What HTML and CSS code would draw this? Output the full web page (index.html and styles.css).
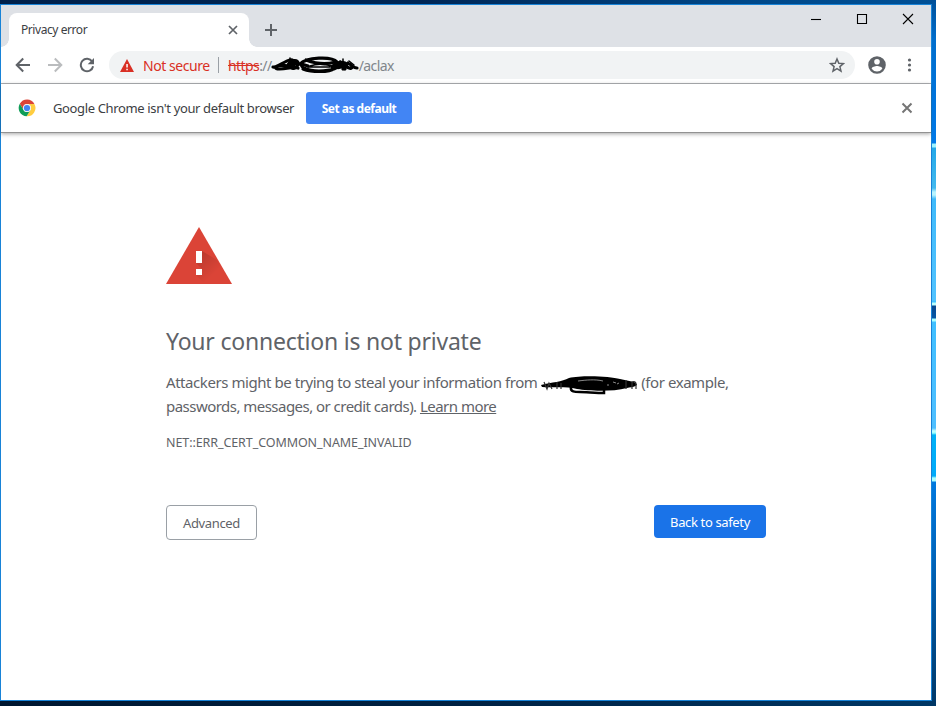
FILE: index.html
```
<!DOCTYPE html>
<html lang="en">
<head>
  <meta charset="UTF-8" />
  <meta name="viewport" content="width=device-width, initial-scale=1.0" />
  <title>Privacy error</title>
  <link rel="stylesheet" href="styles.css">
</head>
<body>
  <div class="window">
    <div class="titlebar">
      <div class="tab">
        <span class="tab-title">Privacy error</span>
        <svg class="tab-close" width="10" height="10" viewBox="0 0 10 10"><path d="M1 1l8 8M9 1L1 9" /></svg>
      </div>
      <svg class="new-tab" width="14" height="14" viewBox="0 0 14 14"><path d="M7 1v12M1 7h12" /></svg>
      <div class="window-buttons">
        <svg width="12" height="12" viewBox="0 0 12 12"><path d="M1 6.5h10" /></svg>
        <svg width="12" height="12" viewBox="0 0 12 12"><path d="M1.5 1.5h9v9h-9z" /></svg>
        <svg width="12" height="12" viewBox="0 0 12 12"><path d="M1 1l10 10M11 1L1 11" /></svg>
      </div>
    </div>

    <div class="toolbar">
      <svg class="nav-icon" width="16" height="16" viewBox="0 0 16 16"><path d="M15 8H2M8.2 1.5L1.7 8l6.5 6.5" /></svg>
      <svg class="nav-icon disabled" width="16" height="16" viewBox="0 0 16 16"><path d="M1 8h13M7.8 1.5L14.3 8l-6.5 6.5" /></svg>
      <svg class="nav-icon" width="16" height="16" viewBox="0 0 16 16"><path d="M13.2 4.6A6.2 6.2 0 1 0 14.1 9.2" /><path class="solid" d="M15 1v6.3H8.7z" /></svg>
      <div class="omnibox">
        <svg class="warn-icon" width="14" height="13" viewBox="0 0 14 13"><path fill="#d93025" d="M7 0l7 13H0z" /><path fill="#fff" d="M6.3 5h1.5v3.5H6.3zM6.3 9.7h1.5v1.5H6.3z" /></svg>
        <span class="not-secure">Not secure</span>
        <span class="divider"></span>
        <span class="url"><s>https</s>://<svg class="url-scribble" width="90" height="20" viewBox="0 0 90 20">
          <path d="M3 12C8 13 14 6 20 5s5 7-1 8-15 2-13-1 14-1 22 1" />
          <path d="M17 12C20 4 29 4 28 9s-8 6-7 2 12-2 17 0" />
          <path d="M30 9C36 2 62 1 67 7s-6 9-18 9-20-4-17-8M33 14c8 3 26 4 32-1M36 5c8 3 20 5 29 2" />
          <path d="M62 12c5-5 10-5 13-4s-6 6-9 4 6-5 10-1 8 2 5-1 2 3 6 3M70 7l5 7M78 8l-5 6" />
          <path class="thin" d="M40 11c8-3 15-2 22 0M20 3v3M73 4v4M79 6l5 4M38 12h22" />
        </svg>/aclax</span>
        <svg class="star" width="16" height="16" viewBox="0 0 16 16"><path d="M8 2l1.8 4.2 4.6.4-3.5 3 1.1 4.5L8 11.7l-4 2.4 1.1-4.5-3.5-3 4.6-.4z" /></svg>
      </div>
      <svg class="avatar" width="18" height="18" viewBox="0 0 18 18"><path d="M9 .2a8.8 8.8 0 1 0 0 17.6A8.8 8.8 0 0 0 9 .2zM9 3a2.8 2.8 0 1 1 0 5.6A2.8 2.8 0 0 1 9 3zm0 12.5a6.3 6.3 0 0 1-5.3-2.8c0-1.7 3.5-2.7 5.3-2.7s5.3 1 5.3 2.7A6.3 6.3 0 0 1 9 15.5z" /></svg>
      <svg class="menu" width="5" height="14" viewBox="0 0 5 14"><circle cx="2.5" cy="2" r="1.6" /><circle cx="2.5" cy="7" r="1.6" /><circle cx="2.5" cy="12" r="1.6" /></svg>
    </div>

    <div class="infobar">
      <svg class="chrome-logo" width="18" height="18" viewBox="0 0 18 18">
        <path fill="#db4437" d="M1.8 4.8A8.3 8.3 0 0 1 16.400 5H9a4 4 0 0 0-3.600 5.800z" />
        <path fill="#ffcd40" d="M16.400 5A8.300 8.300 0 0 1 8.600 17.300L12.500 11A4 4 0 0 0 9 5z" />
        <path fill="#0f9d58" d="M1.800 4.800A8.300 8.300 0 0 0 8.600 17.300l3.900-6.300a4 4 0 0 1-7.100-.2z" />
        <circle cx="9" cy="9" r="3.900" fill="#f1f1f1" />
        <circle cx="9" cy="9" r="3.100" fill="#4285f4" />
      </svg>
      <span class="infobar-text">Google Chrome isn't your default browser</span>
      <button class="default-button">Set as default</button>
      <svg class="infobar-close" width="12" height="12" viewBox="0 0 12 12"><path d="M1.5 1.5l9 9M10.5 1.5l-9 9" /></svg>
    </div>

    <main class="page">
      <div class="interstitial">
        <svg class="big-warning" width="66" height="57" viewBox="0 0 66 57">
          <defs>
            <linearGradient id="shade" x1="0" y1="0" x2="1" y2="1">
              <stop offset="0" stop-color="#000" stop-opacity=".18" />
              <stop offset=".6" stop-color="#000" stop-opacity="0" />
            </linearGradient>
          </defs>
          <path fill="#db4437" d="M33 0l33 57H0z" />
          <path fill="url(#shade)" d="M36 24l15 9 15 24H39l-9-9 6-6-6-6z" />
          <path fill="#fff" d="M30 24h6v12h-6zM30 42h6v6h-6z" />
        </svg>
        <h1>Your connection is not private</h1>
        <p class="message"><span class="line-one">Attackers might be trying to steal your information from <svg class="host-scribble" width="98" height="20" viewBox="0 0 98 20">
          <path class="ink" d="M1 10C12 7 22 7 29 3 41 0 70 1 80 4l14 3c6 3 2 5-7 6-15 4-38 3-50 1-12-3-24-1-35-2z" />
          <path d="M31 12c-1 5 4 5 9 5s17 1 24 1v-4" />
          <path class="letters" d="M4 7l3 7 2-6 3 6M17 7v7M21 14V8M86 5v9M92 14V7c2-1 4 0 4 2v5" />
          <path class="gap" d="M38 6c8-1 17-2 25 0M73 7l3 1M77 9l2-1M67 10l2 0" />
        </svg> (for example,</span> <span class="line-two">passwords, messages, or credit cards). <a href="#">Learn more</a></span></p>
        <div class="error-code">NET::ERR_CERT_COMMON_NAME_INVALID</div>
        <div class="actions">
          <button class="advanced">Advanced</button>
          <button class="safety">Back to safety</button>
        </div>
      </div>
    </main>
  </div>
  <div class="desktop-edge"></div>
</body>
</html>
```
FILE: styles.css
```
* {
  box-sizing: border-box;
}

body {
  margin: 0;
  height: 706px;
  padding: 4px 0 5px;
  display: flex;
  overflow: hidden;
  font-family: "Noto Sans", "Open Sans", sans-serif;
  background: linear-gradient(90deg, #00204a 0%, #002655 45%, #004889 80%, #005096 100%) top / 100% 4px no-repeat,
    linear-gradient(90deg, #00162f 0%, #002142 50%, #003765 100%);
}

svg {
  display: block;
  flex: none;
}

button {
  font-family: inherit;
  white-space: nowrap;
  padding: 0;
}

.window {
  width: 932px;
  flex: none;
  display: flex;
  flex-direction: column;
  background-color: #fff;
  border: 1px solid #1883d7;
}

.desktop-edge {
  width: 4px;
  margin-top: -4px;
  background: linear-gradient(#004f98 0, #006dcc 40px, #0079e8 143px, #9ff4ff 144px, #9ff4ff 147px, #24a8e8 148px, #43b9ee 188px, #b9f4ff 192px, #b9f4ff 195px, #40bafa 199px, #52c3ff 300px, #36c0ff 302px, #bff 303px, #bff 305px, #07478f 306px, #0757a5 318px, #aff 319px, #aff 321px, #40bfff 322px, #50bfff 428px, #c4ffff 431px, #9ff 433px, #00b1f6 435px, #00aafa 476px, #aff 478px, #aff 481px, #0078df 482px, #0063b9 560px, #00396a 701px, #00315d 706px);
}

/* browser chrome */
.titlebar {
  height: 42px;
  flex: none;
  display: flex;
  padding: 8px 17px 0 8px;
  background-color: #dee1e6;
}

.tab {
  width: 240px;
  height: 34px;
  display: flex;
  align-items: center;
  justify-content: space-between;
  padding: 0 11px 0 12px;
  background-color: #fff;
  border-radius: 8px 8px 0 0;
  position: relative;
}

.tab::before,
.tab::after {
  content: "";
  position: absolute;
  bottom: 0;
  width: 8px;
  height: 8px;
}

.tab::before {
  left: -8px;
  background: radial-gradient(circle at 0 0, transparent 7.5px, #fff 8px);
}

.tab::after {
  right: -8px;
  background: radial-gradient(circle at 100% 0, transparent 7.5px, #fff 8px);
}

.tab-title {
  padding-bottom: 1px;
  font-size: 12px;
  letter-spacing: -0.43px;
  color: #3c4043;
}

.tab-close,
.new-tab {
  fill: none;
  stroke: #5f6368;
  stroke-width: 1.7;
}

.new-tab {
  margin: 10px 0 0 15px;
  stroke-width: 2;
}

.window-buttons {
  margin-left: auto;
  display: flex;
  gap: 34px;
}

.window-buttons svg {
  fill: none;
  stroke: #000;
  stroke-width: 1.1;
}

.toolbar {
  height: 37px;
  flex: none;
  display: flex;
  align-items: center;
  padding-left: 14px;
  border-bottom: 1px solid #b0b2b5;
}

.nav-icon {
  margin-right: 16px;
  fill: none;
  stroke: #5f6368;
  stroke-width: 2;
}

.disabled {
  stroke: #babcbe;
}

.solid {
  fill: #5f6368;
  stroke: none;
}

.omnibox {
  width: 746px;
  height: 28px;
  margin-left: -2px;
  padding: 0 10px 0 11px;
  display: flex;
  align-items: center;
  border-radius: 14px;
  background-color: #f1f3f4;
  font-size: 14px;
  white-space: nowrap;
}

.not-secure {
  width: 66px;
  margin-left: 9px;
  letter-spacing: -0.45px;
  color: #d93025;
}

.divider {
  width: 1px;
  height: 16px;
  margin: 0 9px;
  background-color: #9aa0a6;
}

.url {
  display: flex;
  align-items: center;
  letter-spacing: -0.58px;
  color: #80868b;
}

.url s {
  color: #d93025;
}

.url-scribble {
  margin: 0 -1px 0 -2px;
  fill: none;
  stroke: #000;
  stroke-width: 3.2;
  stroke-linecap: round;
}

.thin {
  stroke-width: 1.5;
}

.star {
  margin-left: auto;
  fill: none;
  stroke: #5f6368;
  stroke-width: 1.5;
}

.avatar {
  margin-left: 13px;
  fill: #5f6368;
}

.menu {
  margin-left: 21px;
  fill: #5f6368;
}

.infobar {
  height: 49px;
  flex: none;
  display: flex;
  align-items: center;
  padding: 0 18px 0 17px;
  border-bottom: 1px solid #929292;
  box-shadow: 0 1px 4px rgba(0, 0, 0, 0.35);
}

.infobar-text {
  width: 241px;
  margin: 0 12px 0 17px;
  font-size: 13px;
  letter-spacing: -0.36px;
  white-space: nowrap;
  color: #3c4043;
}

.default-button {
  width: 106px;
  height: 32px;
  border: 0;
  border-radius: 3px;
  background-color: #4285f4;
  color: #fff;
  font-size: 12px;
  font-weight: bold;
  letter-spacing: -0.5px;
}

.infobar-close {
  margin-left: auto;
  fill: none;
  stroke: #757575;
  stroke-width: 2;
}

/* interstitial */
.page {
  flex: 1;
  padding: 94px 0 0 165px;
}

.interstitial {
  width: 600px;
  color: #5f6368;
}

h1 {
  margin: 41px 0 0;
  font-size: 23px;
  font-weight: normal;
  line-height: 32px;
  letter-spacing: -0.22px;
  white-space: nowrap;
}

.message {
  margin: 13px 0 0;
  font-size: 15px;
  line-height: 24px;
  letter-spacing: -0.44px;
}

.line-one,
.line-two {
  display: block;
  height: 24px;
  white-space: nowrap;
}

.line-two {
  letter-spacing: -0.53px;
}

.host-scribble {
  display: inline-block;
  vertical-align: -5px;
  margin: -2px 0 -2px -1px;
  fill: none;
  stroke: #000;
  stroke-width: 2.5;
}

.ink {
  fill: #000;
  stroke: none;
}

.letters {
  stroke: #333;
  stroke-width: 1.2;
}

.gap {
  stroke: #aaa;
  stroke-width: 0.8;
}

.message a {
  color: inherit;
}

.error-code {
  margin-top: 16px;
  font-size: 12.5px;
  line-height: 18px;
  letter-spacing: -0.08px;
}

.actions {
  margin-top: 53px;
  display: flex;
  justify-content: space-between;
}

.actions button {
  border-radius: 4px;
  font-size: 13px;
  letter-spacing: -0.36px;
}

.advanced {
  width: 91px;
  height: 35px;
  border: 1px solid #9aa0a6;
  background-color: #fff;
  color: #5f6368;
}

.actions .safety {
  width: 112px;
  height: 33px;
  border: 0;
  background-color: #1a73e8;
  color: #fff;
}
```
